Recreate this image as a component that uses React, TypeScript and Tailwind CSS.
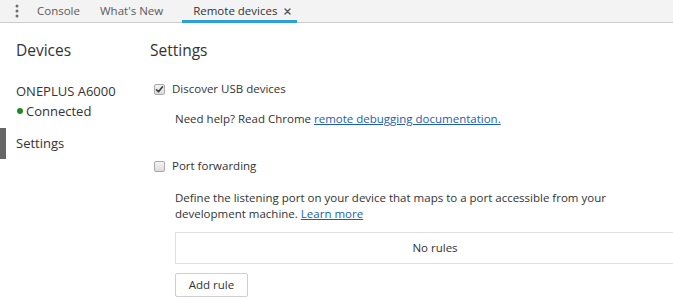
import React from "react";

const FONT = { fontFamily: '"Segoe UI", "Open Sans", sans-serif' };

function Checkbox({ checked }: { checked?: boolean }) {
  return (
    <span className="flex h-[11px] w-[11px] items-center justify-center rounded-[2px] border border-[#a9a9a9] bg-gradient-to-b from-[#f4f4f4] to-[#dcdcdc]">
      {checked && (
        <svg width="9" height="9" viewBox="0 0 9 9" fill="none" stroke="#3b3b3b" strokeWidth="1.6" strokeLinecap="round" strokeLinejoin="round">
          <path d="M1.5 4.8l2 2 4-5" />
        </svg>
      )}
    </span>
  );
}

export default function App() {
  return (
    <div className="h-[299px] w-[673px] overflow-hidden bg-white text-[#333]" style={FONT}>
      {/* Tab strip */}
      <div className="flex h-[23px] items-stretch border-b border-[#cccccc] bg-[#f3f3f3] text-[11.5px]">
        <div className="flex w-[32px] items-center justify-center pl-[1px]">
          <svg width="4" height="14" viewBox="0 0 4 14" fill="#6e6e6e">
            <circle cx="2" cy="2" r="1.5" />
            <circle cx="2" cy="7" r="1.5" />
            <circle cx="2" cy="12" r="1.5" />
          </svg>
        </div>
        <div className="flex items-center px-[5px] text-[#5a5a5a]">Console</div>
        <div className="ml-[10px] flex items-center px-[5px] text-[#5a5a5a]">What's New</div>
        <div className="relative ml-[14px] flex items-center gap-[7px] pl-[11px] pr-[6px] text-[#333]">
          <span>Remote devices</span>
          <svg width="7" height="7" viewBox="0 0 7 7" stroke="#555" strokeWidth="1.4" strokeLinecap="round">
            <path d="M1 1l5 5M6 1L1 6" />
          </svg>
          <span className="absolute bottom-[-1px] left-0 right-0 h-[3px] bg-[#2ba1d6]" />
        </div>
      </div>

      <div className="flex">
        {/* Sidebar */}
        <div className="w-[150px] shrink-0 pt-[15px]">
          <div className="pl-[16px] text-[15.5px] leading-[24px] text-[#333]">Devices</div>
          <div className="mt-[19px] pl-[16px] text-[13px] leading-[20px] text-[#333]">ONEPLUS A6000</div>
          <div className="flex items-center gap-[3px] pl-[17px] text-[13px] leading-[20px] text-[#333]">
            <span className="h-[6px] w-[6px] rounded-full bg-[#1f8a1f]" />
            <span>Connected</span>
          </div>
          <div className="mt-[7px] flex h-[31px] items-center">
            <span className="h-full w-[6px] bg-[#666666]" />
            <span className="pl-[10px] text-[13px] text-[#333]">Settings</span>
          </div>
        </div>

        {/* Settings panel */}
        <div className="flex-1 pt-[15px] text-[11.5px] leading-[16px]">
          <div className="text-[15.5px] leading-[24px] text-[#333]">Settings</div>

          <label className="mt-[19px] flex items-center gap-[7px] pl-[4px]">
            <Checkbox checked />
            <span>Discover USB devices</span>
          </label>
          <div className="mt-[14px] pl-[25px]">
            Need help? Read Chrome{" "}
            <a className="text-[#1a5fb4] underline">remote debugging documentation.</a>
          </div>

          <label className="mt-[31px] flex items-center gap-[7px] pl-[4px]">
            <Checkbox />
            <span>Port forwarding</span>
          </label>
          <div className="mt-[16px] w-[485px] pl-[25px]">
            Define the listening port on your device that maps to a port accessible from your development machine.{" "}
            <a className="text-[#1a5fb4] underline">Learn more</a>
          </div>

          <div className="ml-[25px] mt-[10px] flex h-[32px] w-[520px] items-center justify-center border border-[#e0e0e0]">
            No rules
          </div>

          <button className="ml-[25px] mt-[9px] h-[24px] w-[73px] rounded-[2px] border border-[#cfcfcf] bg-white text-[#333]">
            Add rule
          </button>
        </div>
      </div>
    </div>
  );
}
